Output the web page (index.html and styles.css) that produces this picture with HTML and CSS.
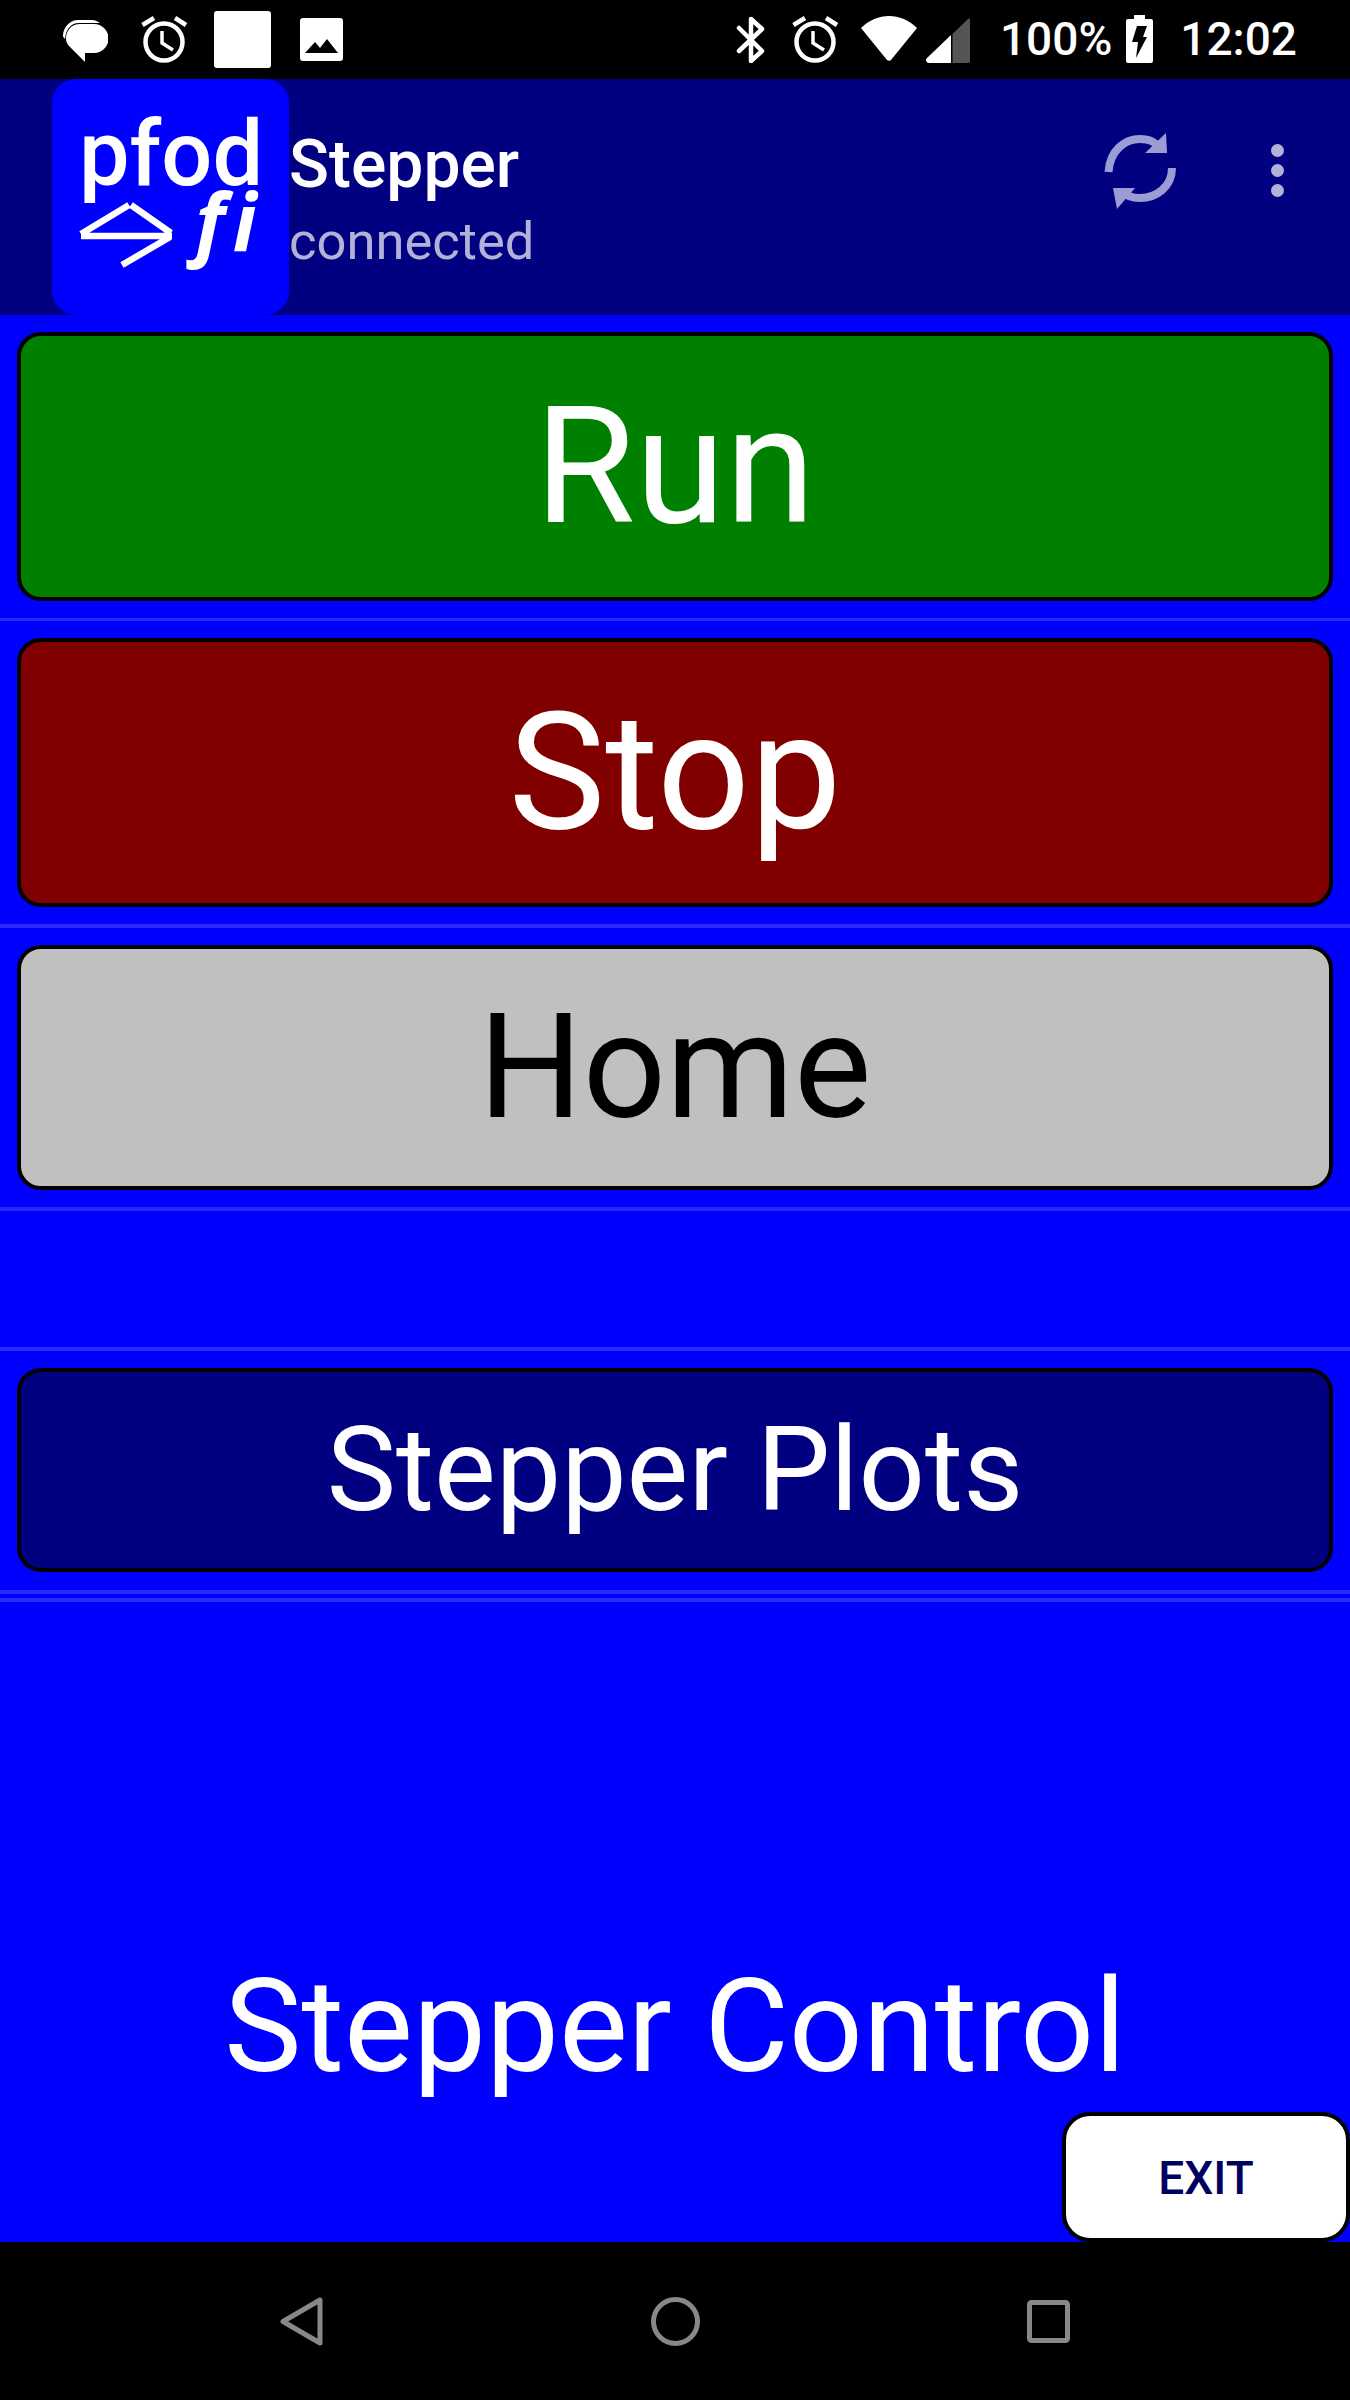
FILE: index.html
```html
<!DOCTYPE html>
<html lang="en">
<head>
<meta charset="utf-8">
<title>Stepper</title>
<link rel="stylesheet" href="styles.css">
</head>
<body>
<div class="phone">
  <header class="statusbar">
    <div class="status-left">
      <svg class="si si-bubble" viewBox="0 0 45 44"><path class="wf" d="M0 17C0 8 7 1 15 1h14c3 0 5 1 8 3H16C8 4 3 10 2 20c-1-1-2-2-2-3z"/><path class="wf" d="M17 5h14a14.500 14.500 0 0 1 0 29h-9v9L6 27C4 25 3 22 3 19.500 3 11 9 5 17 5z"/></svg>
      <svg class="si si-alarm" viewBox="0 0 47 47"><circle class="wl" cx="23" cy="26" r="18.500" stroke-width="4.500"/><path class="wl" d="M21 15v12l11 7" stroke-width="3.500"/><path class="wl" d="M1.500 9L13 2M45 9L34 2" stroke-width="4.500"/></svg>
      <div class="si-card"></div>
      <svg class="si si-image" viewBox="0 0 43 43"><path class="wf" fill-rule="evenodd" d="M3 0h37a3 3 0 0 1 3 3v37a3 3 0 0 1-3 3H3a3 3 0 0 1-3-3V3a3 3 0 0 1 3-3zM5 35h33L27 21l-7 9-5-6z"/></svg>
    </div>
    <div class="status-right">
      <svg class="si si-bt" viewBox="0 0 29 47"><path class="wl" d="M3 12l23 23-11 10V3l11 10L3 35" stroke-width="4.500" stroke-linejoin="round" stroke-linecap="round"/></svg>
      <svg class="si si-alarm si-alarm-r" viewBox="0 0 47 47"><circle class="wl" cx="23" cy="26" r="18.500" stroke-width="4.500"/><path class="wl" d="M21 15v12l11 7" stroke-width="3.500"/><path class="wl" d="M1.500 9L13 2M45 9L34 2" stroke-width="4.500"/></svg>
      <svg class="si si-wifi" viewBox="0 0 56 45"><path class="wf" d="M0 12C8 4 18 0 28 0s20 4 28 12L30 44c-1 1-3 1-4 0z"/></svg>
      <svg class="si si-signal" viewBox="0 0 44 45"><path class="wf" d="M1 40L25 17V45H3c-3 0-4-3-2-5z"/><path class="sig-dim" d="M26.500 16L42 1c1-1 2 0 2 1V43a2 2 0 0 1-2 2H26.500z"/></svg>
      <span class="status-pct">100%</span>
      <svg class="si si-batt" viewBox="0 0 27 48"><path class="wf" fill-rule="evenodd" d="M8 0h11v4h6a2 2 0 0 1 2 2v40a2 2 0 0 1-2 2H2a2 2 0 0 1-2-2V6a2 2 0 0 1 2-2h6zM11 11h10l-4 11h4L10 43l2-16H6z"/></svg>
      <span class="status-time">12:02</span>
    </div>
  </header>

  <div class="toolbar">
    <div class="logo">
      <div class="logo-pfod">pfod</div>
      <div class="logo-low">
        <svg class="logo-arrow" viewBox="0 0 96 70"><path d="M3 34L51 5M53 5l40 28M3 36h91M92 37L44 65" fill="none" stroke="#fff" stroke-width="6.500"/></svg>
        <div class="logo-fi">fi</div>
      </div>
    </div>
    <div class="titles">
      <div class="title">Stepper</div>
      <div class="subtitle">connected</div>
    </div>
    <svg class="sync" viewBox="0 0 73 79"><path d="M4.500 40C6 18 21 7 36 7c10 0 15 3 20 9" fill="none" stroke-width="8"/><path d="M68 36c0 19-16 30-32 30-8 0-14-2-19-7" fill="none" stroke-width="8"/><path class="sync-head" d="M62 1l1 20H41zM13 77L9 56h22z"/></svg>
    <div class="overflow"><i></i><i></i><i></i></div>
  </div>

  <main class="content">
    <div class="row row-first"><button class="btn btn-run">Run</button></div>
    <div class="row"><button class="btn btn-stop">Stop</button></div>
    <div class="row"><button class="btn btn-home">Home</button></div>
    <div class="row row-empty"></div>
    <div class="row row-plots"><button class="btn btn-plots">Stepper Plots</button></div>
    <div class="row row-thin"></div>
    <div class="foot">
      <div class="foot-title">Stepper Control</div>
      <button class="exit">EXIT</button>
    </div>
  </main>

  <nav class="navbar">
    <svg class="nav-back" viewBox="0 0 43 49"><path d="M40 3v43L3 24.500z" fill="none" stroke="#888" stroke-width="5" stroke-linejoin="round"/></svg>
    <svg class="nav-home" viewBox="0 0 49 49"><circle cx="24.500" cy="24.500" r="22" fill="none" stroke="#888" stroke-width="5"/></svg>
    <svg class="nav-recent" viewBox="0 0 43 43"><rect x="2.500" y="2.500" width="38" height="38" rx="2" fill="none" stroke="#888" stroke-width="5"/></svg>
  </nav>
</div>
</body>
</html>
```
FILE: styles.css
```css
* { box-sizing: border-box; }
html, body { margin: 0; padding: 0; background: #000; }
body { font-family: Roboto, "Liberation Sans", sans-serif; }
.phone { width: 1350px; height: 2400px; display: flex; flex-direction: column; overflow: hidden; }

.statusbar { height: 79px; background: #000; color: #fff; display: flex; justify-content: space-between; align-items: flex-start; }
.status-left { display: flex; align-items: flex-start; margin-left: 63px; }
.status-right { display: flex; align-items: flex-start; margin-right: 53px; }
.si { display: block; flex: none; }
.wf { fill: #fff; }
.wl { fill: none; stroke: #fff; }
.sig-dim { fill: #555; }
.si-bubble { width: 45px; height: 44px; margin-top: 19px; }
.si-alarm { width: 47px; height: 47px; margin-top: 16px; margin-left: 33px; }
.si-card { width: 57px; height: 57px; margin-top: 11px; margin-left: 26px; background: #fff; border-radius: 3px; }
.si-image { width: 43px; height: 43px; margin-top: 18px; margin-left: 29px; }
.si-bt { width: 29px; height: 47px; margin-top: 16px; }
.si-alarm-r { margin-left: 27.500px; }
.si-wifi { width: 56px; height: 45px; margin-top: 16px; margin-left: 22px; }
.si-signal { width: 44px; height: 45px; margin-top: 18px; margin-left: 8.500px; }
.status-pct { font-size: 46px; line-height: 53px; margin-top: 13px; margin-left: 30px; font-weight: 500; }
.si-batt { width: 27px; height: 48px; margin-top: 15px; margin-left: 14px; }
.status-time { font-size: 46px; line-height: 53px; margin-top: 13px; margin-left: 27px; font-weight: 500; }

.toolbar { height: 236px; background: #000080; display: flex; align-items: flex-start; padding-left: 52px; flex: none; }
.logo { width: 237px; height: 236px; background: #0000ff; border-radius: 24px; color: #fff; padding: 36px 0 0 26px; flex: none; }
.logo-pfod { font-size: 90px; line-height: 80px; font-weight: 500; padding-left: 1px; }
.logo-low { display: flex; align-items: flex-start; }
.logo-arrow { width: 96px; height: 70px; margin-top: 5px; flex: none; }
.logo-fi { font-family: "Open Sans", Roboto, sans-serif; font-size: 80px; line-height: 50px; font-style: italic; font-weight: 700; margin-left: 21px; letter-spacing: 8px; font-variant-ligatures: none; }
.titles { flex: 1; padding-top: 47px; }
.title { font-size: 66px; line-height: 77px; font-weight: 500; color: #fff; }
.subtitle { font-size: 52.500px; line-height: 61px; margin-top: 8px; color: #b2b2d9; }
.sync { width: 73px; height: 79px; flex: none; margin-right: 94px; margin-top: 53px; fill: none; stroke: #9c9cd4; }
.sync-head { fill: #9c9cd4; stroke: none; }
.overflow { display: flex; flex-direction: column; gap: 7px; margin-right: 66px; margin-top: 65px; flex: none; }
.overflow i { display: block; width: 13px; height: 13px; border-radius: 50%; background: #b2b2d9; }

.content { height: 1927px; flex: none; background: #0000ff; display: flex; flex-direction: column; }
.row { padding: 17px; border-bottom: 4px solid #2a2aff; }
.row-first { border-bottom-width: 3px; }
.row-plots { padding-bottom: 18px; }
.row-empty { height: 140px; padding: 0; }
.row-thin { height: 8px; padding: 0; }
.btn { display: block; width: 100%; border: 4px solid #000; border-radius: 24px; font-family: inherit; padding: 0; }
.btn-run { height: 269px; background: #008000; color: #fff; font-size: 163px; }
.btn-stop { height: 269px; background: #800000; color: #fff; font-size: 163px; }
.btn-home { height: 245px; background: #c0c0c0; color: #000; font-size: 146px; }
.btn-plots { height: 204px; background: #000080; color: #fff; font-size: 116.500px; }
.foot { flex: 1; display: flex; flex-direction: column; justify-content: flex-end; }
.foot-title { font-size: 130px; line-height: 154px; color: #fff; text-align: center; margin-bottom: 8px; }
.exit { align-self: flex-end; width: 288px; height: 130px; background: #fff; border: 4px solid #000; border-radius: 28px; color: #00005f; font-family: inherit; font-size: 46px; font-weight: 500; padding: 2px 0 0; }

.navbar { flex: 1; background: #000; display: flex; align-items: flex-start; padding: 55px 0 0 280px; }
.nav-back { width: 43px; height: 49px; }
.nav-home { width: 49px; height: 49px; margin-left: 328px; }
.nav-recent { width: 43px; height: 43px; margin-left: 327px; margin-top: 3px; }
```
